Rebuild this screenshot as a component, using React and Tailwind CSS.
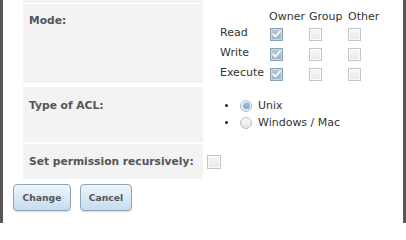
import React from "react";

function Check({ checked, big }) {
  const size = big ? "w-[14px] h-[14px]" : "w-[13px] h-[13px]";
  if (checked) {
    return (
      <span className={`${size} inline-flex items-center justify-center border border-[#8ba2b3] bg-gradient-to-b from-[#b4cbd9] to-[#9ab5c7] shadow-[inset_0_0_0_1px_#c6d8e3]`}>
        <svg width="9" height="8" viewBox="0 0 9 8" fill="none">
          <path d="M1 4.2 L3.5 6.6 L8 1.2" stroke="#ffffff" strokeWidth="1.6" strokeLinecap="round" strokeLinejoin="round" />
        </svg>
      </span>
    );
  }
  return (
    <span className={`${size} inline-block border border-[#c3c7ca] bg-gradient-to-b from-[#f6f7f8] to-[#e6e9eb] shadow-[inset_0_0_0_1px_#fbfbfb]`} />
  );
}

function Radio({ checked }) {
  return (
    <span className="w-[12px] h-[12px] rounded-full border border-[#b4bfc7] bg-gradient-to-b from-[#f7f8f9] to-[#e4e8eb] inline-flex items-center justify-center">
      {checked && <span className="w-[7px] h-[7px] rounded-full bg-gradient-to-b from-[#a6c9e6] to-[#79a7cf]" />}
    </span>
  );
}

function Button({ children, w }) {
  return (
    <button className={`${w} h-[27px] rounded-[4px] border border-[#8ea5b8] bg-gradient-to-b from-[#eef5fc] to-[#c6dcf0] text-[9.2px] font-bold text-[#555] shadow-[0_1px_1px_rgba(0,0,0,0.15)] flex items-center justify-center`}>
      {children}
    </button>
  );
}

export default function App() {
  const rows = [
    ["Read", [true, false, false]],
    ["Write", [true, false, false]],
    ["Execute", [true, false, false]],
  ];
  return (
    <div className="w-[406px] h-[223px] bg-white border-x-[3px] border-[#575757] overflow-hidden font-['DejaVu_Sans',Verdana,sans-serif] text-[11px] text-[#333] flex flex-col">
      <div className="ml-[20px] w-[180px] h-[3px] bg-[#f3f3f3]" />

      {/* Mode */}
      <div className="ml-[20px] mt-[1px] flex gap-[4px] h-[79px]">
        <div className="w-[180px] h-[79px] bg-[#f3f3f3] pl-[6px] pt-[8px] font-bold text-[10.7px] leading-[17px] text-[#555]">
          Mode:
        </div>
        <div className="pl-[13px] pt-[5px]">
          <div className="grid grid-cols-[49px_40px_39px_auto]">
            <div className="h-[15px]" />
            <div className="h-[15px] leading-[15px]">Owner</div>
            <div className="h-[15px] leading-[15px]">Group</div>
            <div className="h-[15px] leading-[15px]">Other</div>
            {rows.map(([label, vals]) => (
              <React.Fragment key={label}>
                <div className="h-[20px] flex items-center">
                  <span className="leading-[17px] pb-[3px]">{label}</span>
                </div>
                {vals.map((v, i) => (
                  <div key={i} className={`h-[20px] flex items-center ${i === 0 ? "pl-[1px]" : ""}`}>
                    <Check checked={v} />
                  </div>
                ))}
              </React.Fragment>
            ))}
          </div>
        </div>
      </div>

      {/* Type of ACL */}
      <div className="ml-[20px] mt-[4px] flex gap-[4px] h-[55px]">
        <div className="w-[180px] h-[55px] bg-[#f3f3f3] pl-[6px] pt-[10px] font-bold text-[10.7px] leading-[17px] text-[#555]">
          Type of ACL:
        </div>
        <div className="pl-[18px] pt-[10px] flex flex-col">
          {[["Unix", true], ["Windows / Mac", false]].map(([t, c]) => (
            <div key={t} className="h-[17px] flex items-center">
              <span className="w-[3px] h-[3px] rounded-full bg-[#222]" />
              <span className="ml-[12px] flex items-center">
                <Radio checked={c} />
              </span>
              <span className="ml-[6px] leading-[17px]">{t}</span>
            </div>
          ))}
        </div>
      </div>

      {/* Set permission recursively */}
      <div className="ml-[20px] mt-[2px] flex gap-[4px] h-[35px]">
        <div className="w-[180px] h-[35px] bg-[#f3f3f3] pl-[6px] pt-[9px] font-bold text-[10.7px] leading-[17px] text-[#555]">
          Set permission recursively:
        </div>
        <div className="pt-[11px]">
          <Check checked={false} big />
        </div>
      </div>

      {/* Buttons */}
      <div className="ml-[10px] mt-[5px] flex gap-[9px]">
        <Button w="w-[58px]">Change</Button>
        <Button w="w-[52px]">Cancel</Button>
      </div>
    </div>
  );
}
